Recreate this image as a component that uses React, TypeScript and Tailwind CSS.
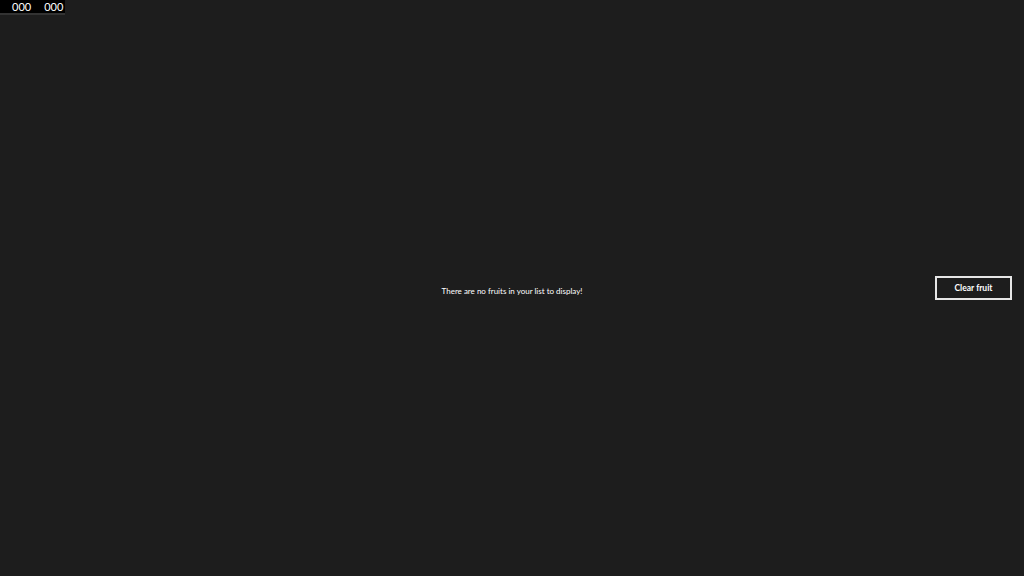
export default function App() {
  return (
    <div
      className="relative grid h-[576px] w-[1024px] grid-cols-[1fr_auto_1fr] items-center bg-[#1d1d1d] text-white"
      style={{ fontFamily: 'Lato, "Noto Sans", sans-serif' }}
    >
      {/* frame-rate counter overlay */}
      <div className="absolute left-0 top-0 flex flex-col">
        <div className="flex h-[13px] w-[65px] items-center gap-[13px] bg-black pl-[12px] text-[11px] leading-[13px]">
          <span>000</span>
          <span>000</span>
        </div>
        <div className="h-[2px] w-[65px] bg-[#333333]" />
      </div>

      <div />
      <p className="mt-[6px] text-[8px]">There are no fruits in your list to display!</p>
      <div className="flex justify-end pr-[12px]">
        <button className="flex h-[24px] w-[77px] items-center justify-center border-2 border-[#e6e6e6] text-[8.5px] font-bold">
          Clear fruit
        </button>
      </div>
    </div>
  );
}
